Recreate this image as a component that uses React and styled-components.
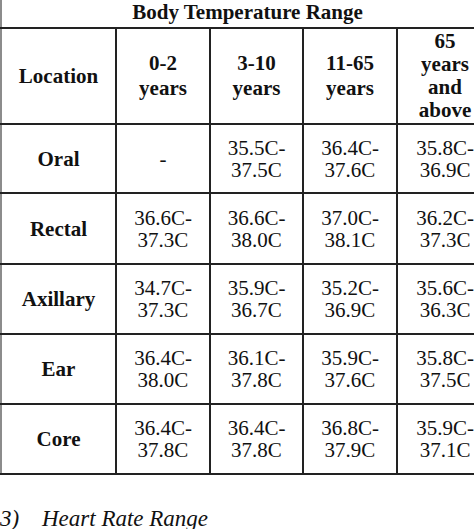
import React from 'react'
import styled, { createGlobalStyle } from 'styled-components'

const GlobalStyle = createGlobalStyle`
  html, body {
    margin: 0;
    padding: 0;
    background: #fff;
  }
  body {
    font-family: 'Liberation Serif', 'Times New Roman', serif;
    color: #111;
  }
`

const Page = styled.div`
  width: 474px;
  height: 529px;
  overflow: hidden;
  background: #fff;
`

const Table = styled.table`
  border-collapse: collapse;
  table-layout: fixed;
  width: 492px;
  font-size: 21px;
  line-height: 22px;
`

const TitleCell = styled.th`
  height: 24px;
  padding: 0 0 3px 0;
  font-weight: bold;
  text-align: center;
  vertical-align: middle;
  border-left: 2px solid #8c8c8c;
  border-bottom: 2px solid #222;
  line-height: 22px;
`

const HeadCell = styled.th`
  height: 94px;
  padding: 0;
  font-weight: bold;
  text-align: center;
  vertical-align: middle;
  border: 2px solid #222;
  border-left: ${(p) => (p.$first ? '2px solid #8c8c8c' : '2px solid #222')};
  line-height: ${(p) => (p.$tight ? '23px' : '25px')};
`

const LabelCell = styled.td`
  height: ${(p) => p.$h}px;
  padding: 0;
  font-weight: bold;
  text-align: center;
  vertical-align: middle;
  border: 2px solid #222;
  border-left: 2px solid #8c8c8c;
`

const ValueCell = styled.td`
  padding: 0;
  text-align: center;
  vertical-align: middle;
  border: 2px solid #222;
  line-height: 22px;
`

const Caption = styled.div`
  display: flex;
  gap: 24px;
  margin-top: 31px;
  font-style: italic;
  font-size: 23px;
  line-height: 26px;
`

const Num = styled.span`
  width: 18px;
`

const rows = [
  { loc: 'Oral', h: 67, vals: [null, ['35.5C-', '37.5C'], ['36.4C-', '37.6C'], ['35.8C-', '36.9C']] },
  { loc: 'Rectal', h: 69, vals: [['36.6C-', '37.3C'], ['36.6C-', '38.0C'], ['37.0C-', '38.1C'], ['36.2C-', '37.3C']] },
  { loc: 'Axillary', h: 68, vals: [['34.7C-', '37.3C'], ['35.9C-', '36.7C'], ['35.2C-', '36.9C'], ['35.6C-', '36.3C']] },
  { loc: 'Ear', h: 68, vals: [['36.4C-', '38.0C'], ['36.1C-', '37.8C'], ['35.9C-', '37.6C'], ['35.8C-', '37.5C']] },
  { loc: 'Core', h: 68, vals: [['36.4C-', '37.8C'], ['36.4C-', '37.8C'], ['36.8C-', '37.9C'], ['35.9C-', '37.1C']] },
]

export default function App() {
  return (
    <Page>
      <GlobalStyle />
      <Table>
        <colgroup>
          <col style={{ width: 115 }} />
          <col style={{ width: 94 }} />
          <col style={{ width: 93 }} />
          <col style={{ width: 94 }} />
          <col style={{ width: 96 }} />
        </colgroup>
        <thead>
          <tr>
            <TitleCell colSpan={5}>Body Temperature Range</TitleCell>
          </tr>
          <tr>
            <HeadCell $first>Location</HeadCell>
            <HeadCell>0-2<br />years</HeadCell>
            <HeadCell>3-10<br />years</HeadCell>
            <HeadCell>11-65<br />years</HeadCell>
            <HeadCell $tight>65<br />years<br />and<br />above</HeadCell>
          </tr>
        </thead>
        <tbody>
          {rows.map((r) => (
            <tr key={r.loc}>
              <LabelCell $h={r.h}>{r.loc}</LabelCell>
              {r.vals.map((v, i) => (
                <ValueCell key={i}>
                  {v ? (
                    <>
                      {v[0]}
                      <br />
                      {v[1]}
                    </>
                  ) : (
                    '-'
                  )}
                </ValueCell>
              ))}
            </tr>
          ))}
        </tbody>
      </Table>
      <Caption>
        <Num>3)</Num>
        <span>Heart Rate Range</span>
      </Caption>
    </Page>
  )
}
